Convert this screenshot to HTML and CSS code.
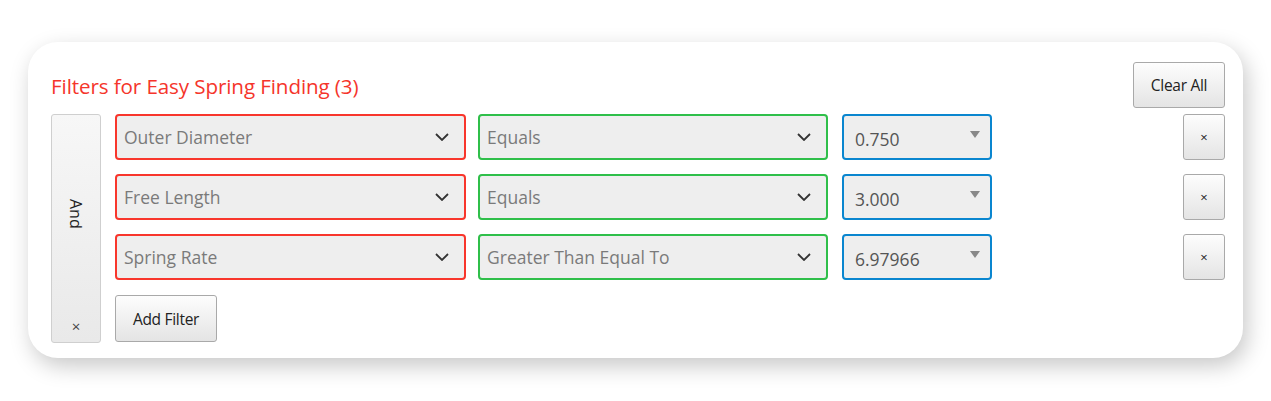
FILE: index.html
```html
<!DOCTYPE html>
<html lang="en">
  <head>
    <meta charset="UTF-8" />
    <title>Spring Filters</title>
    <link rel="stylesheet" href="styles.css">
  </head>
  <body>
    <div class="card">
      <div class="head">
        <h2 class="title">Filters for Easy Spring Finding (3)</h2>
        <button class="btn clear">Clear All</button>
      </div>
      <div class="body">
        <div class="group">
          <span class="group-label">And</span>
          <span class="group-x">&times;</span>
        </div>
        <div class="rows">
          <div class="row">
            <div class="field field-name">Outer Diameter<svg class="chev" viewBox="0 0 14 8"><polyline points="1,1 7,7 13,1" /></svg></div>
            <div class="field field-op">Equals<svg class="chev" viewBox="0 0 14 8"><polyline points="1,1 7,7 13,1" /></svg></div>
            <div class="field field-val">0.750<span class="tri"></span></div>
            <button class="btn remove">&times;</button>
          </div>
          <div class="row">
            <div class="field field-name">Free Length<svg class="chev" viewBox="0 0 14 8"><polyline points="1,1 7,7 13,1" /></svg></div>
            <div class="field field-op">Equals<svg class="chev" viewBox="0 0 14 8"><polyline points="1,1 7,7 13,1" /></svg></div>
            <div class="field field-val">3.000<span class="tri"></span></div>
            <button class="btn remove">&times;</button>
          </div>
          <div class="row">
            <div class="field field-name">Spring Rate<svg class="chev" viewBox="0 0 14 8"><polyline points="1,1 7,7 13,1" /></svg></div>
            <div class="field field-op">Greater Than Equal To<svg class="chev" viewBox="0 0 14 8"><polyline points="1,1 7,7 13,1" /></svg></div>
            <div class="field field-val">6.97966<span class="tri"></span></div>
            <button class="btn remove">&times;</button>
          </div>
          <div class="add-row">
            <button class="btn add">Add Filter</button>
          </div>
        </div>
      </div>
    </div>
  </body>
</html>
```

FILE: styles.css
```css
* {
  margin: 0;
  padding: 0;
  box-sizing: border-box;
}
body {
  background: #fff;
  font-family: "Open Sans", "Liberation Sans", sans-serif;
  padding: 42px 0 43px 28px;
}
.card {
  width: 1215px;
  height: 316px;
  background: #fff;
  border-radius: 30px;
  box-shadow: 4px 8px 22px rgba(0, 0, 0, 0.22);
  padding: 20px 18px 0 23px;
}
.head {
  display: flex;
  justify-content: space-between;
  align-items: center;
}
.title {
  font-size: 20.6px;
  font-weight: normal;
  color: #f5352b;
  margin-top: 2px;
  letter-spacing: -0.1px;
}
.btn {
  font-family: "Open Sans", "Liberation Sans", sans-serif;
  color: #222;
  background: linear-gradient(#fdfdfd, #e4e4e4);
  border: 1px solid #a9a9a9;
  border-radius: 3px;
  cursor: pointer;
}
.clear {
  width: 92px;
  height: 46px;
  font-size: 15.5px;
  letter-spacing: -0.3px;
}
.body {
  display: flex;
  gap: 14px;
  margin-top: 6px;
}
.group {
  width: 50px;
  height: 229px;
  display: flex;
  flex-direction: column;
  align-items: center;
  justify-content: space-between;
  padding: 84px 0 6px;
  background: linear-gradient(#f7f7f7, #e9e9e9);
  border: 1px solid #cfcfcf;
  border-radius: 3px;
}
.group-label {
  writing-mode: vertical-rl;
  font-size: 16px;
  color: #222;
}
.group-x {
  font-size: 15px;
  color: #444;
}
.rows {
  flex: 1;
  display: flex;
  flex-direction: column;
  gap: 14px;
}
.row {
  display: flex;
  align-items: center;
  height: 46px;
}
.field {
  position: relative;
  height: 46px;
  display: flex;
  align-items: center;
  padding-left: 7px;
  background: #eee;
  border: 2px solid;
  border-radius: 4px;
  font-size: 17.5px;
  color: #7a7a7a;
}
.field-name {
  width: 351px;
  border-color: #f8362c;
}
.field-op {
  width: 350px;
  margin-left: 12px;
  border-color: #2fbf4a;
}
.field-val {
  width: 150px;
  margin-left: 14px;
  border-color: #0a86cf;
  color: #555;
  padding-left: 11px;
  padding-top: 3px;
}
.chev {
  position: absolute;
  right: 15px;
  top: 17px;
  width: 14px;
  height: 8px;
  fill: none;
  stroke: #333;
  stroke-width: 1.8;
}
.tri {
  position: absolute;
  right: 10px;
  top: 15px;
  border-left: 5px solid transparent;
  border-right: 5px solid transparent;
  border-top: 7px solid #888;
}
.remove {
  margin-left: auto;
  width: 42px;
  height: 46px;
  font-size: 13px;
}
.add-row {
  margin-top: 1px;
}
.add {
  width: 102px;
  height: 47px;
  font-size: 15.5px;
  letter-spacing: -0.3px;
}
```
